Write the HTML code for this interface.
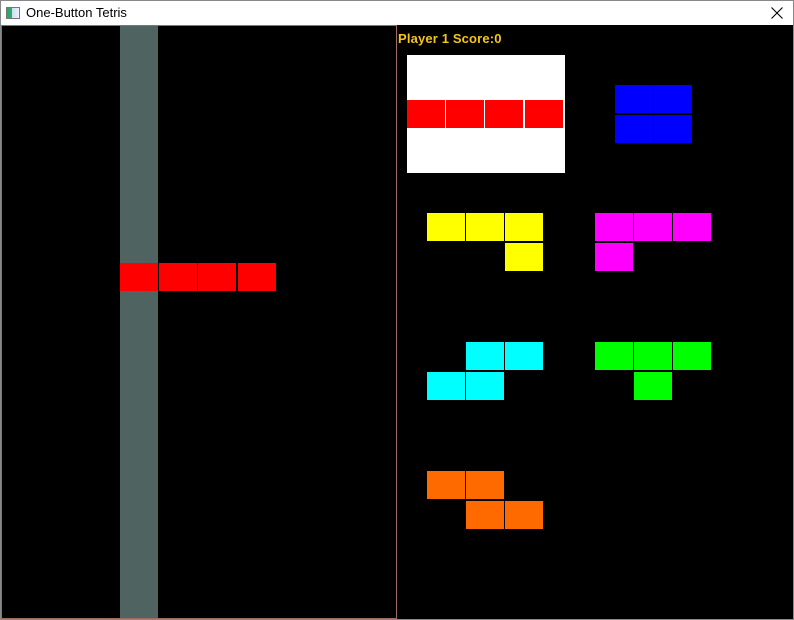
<!DOCTYPE html>
<html><head><style>
*{margin:0;padding:0;box-sizing:border-box}
body{width:794px;height:620px;background:#000;position:relative;overflow:hidden;font-family:"Liberation Sans",sans-serif}
.a{position:absolute}
.c{position:absolute;width:38px;height:28px}
</style></head><body>
<div class="a" style="left:0;top:0;width:794px;height:620px;border:1px solid #888;border-bottom:none"></div>
<div class="a" style="left:1px;top:1px;width:792px;height:24px;background:#fff"></div>
<div class="a" style="left:6px;top:7px;width:14px;height:12px;border:1px solid #777;background:linear-gradient(90deg,#2a6 0,#3a7 40%,#cde 40%,#eef 100%)"></div>
<div class="a" style="left:26px;top:5px;font-size:13px;color:#000">One-Button Tetris</div>
<svg class="a" style="left:771px;top:7px" width="12" height="12"><path d="M0.5 0.5L11.5 11.5M11.5 0.5L0.5 11.5" stroke="#000" stroke-width="1.1"/></svg>
<div class="a" style="left:1px;top:25px;width:396px;height:594px;border:1px solid #a06a5c"></div>
<div class="a" style="left:0;top:619px;width:794px;height:1px;background:#888"></div>
<div class="a" style="left:120px;top:26px;width:38px;height:592px;background:#4f6360"></div>
<div class="a" style="left:398px;top:31px;font-size:13px;font-weight:bold;color:#f5c518;letter-spacing:0.15px">Player 1 Score:0</div>
<div class="a" style="left:407px;top:55px;width:158px;height:118px;background:#fff"></div>
<div id="cells"></div>
<script>
var X=[0,39,78,118],Y=[0,30];
var P=[
["#ff0000",120,263,[[0,0],[1,0],[2,0],[3,0]]],
["#ff0000",407,100,[[0,0],[1,0],[2,0],[3,0]]],
["#0000ff",615,85,[[0,0],[1,0],[0,1],[1,1]]],
["#ffff00",427,213,[[0,0],[1,0],[2,0],[2,1]]],
["#ff00ff",595,213,[[0,0],[1,0],[2,0],[0,1]]],
["#00ffff",427,342,[[1,0],[2,0],[0,1],[1,1]]],
["#00ff00",595,342,[[0,0],[1,0],[2,0],[1,1]]],
["#ff6a00",427,471,[[0,0],[1,0],[1,1],[2,1]]]];
var h="";
P.forEach(function(p){p[3].forEach(function(q){h+='<div class="c" style="background:'+p[0]+';left:'+(p[1]+X[q[0]])+'px;top:'+(p[2]+Y[q[1]])+'px"></div>';});});
document.getElementById("cells").innerHTML=h;
</script>
</body></html>
